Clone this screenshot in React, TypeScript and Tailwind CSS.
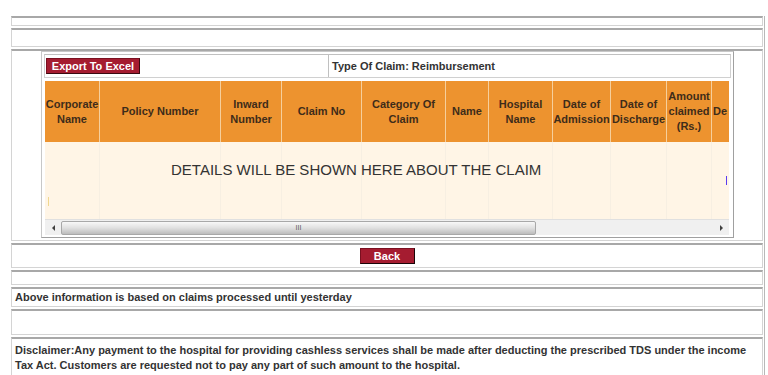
const cols = [
  { w: 55, label: ["Corporate", "Name"] },
  { w: 121, label: ["Policy Number"] },
  { w: 61, label: ["Inward", "Number"] },
  { w: 80, label: ["Claim No"] },
  { w: 84, label: ["Category Of", "Claim"] },
  { w: 43, label: ["Name"] },
  { w: 64, label: ["Hospital", "Name"] },
  { w: 58, label: ["Date of", "Admission"] },
  { w: 56, label: ["Date of", "Discharge"] },
  { w: 45, label: ["Amount", "claimed", "(Rs.)"] },
  { w: 16, label: ["De"] },
];

function Row({ className = "", children }: { className?: string; children?: React.ReactNode }) {
  return (
    <div className={"border border-[#d4d4d4] border-t-[#a8a8a8] border-t-2 " + className}>
      {children}
    </div>
  );
}

export default function App() {
  return (
    <div className="min-h-screen bg-white font-['Liberation_Sans',Arial,sans-serif] text-[#333]">
      <div className="pl-[11px] pt-[16px] w-[765px]">
        <div className="border-r border-[#b8b8b8] pr-[1px] flex flex-col gap-[2px] h-[360px] overflow-hidden">
          <Row className="h-[10px]" />
          <Row className="h-[20px]" />

          {/* claims grid */}
          <Row className="h-[196px]">
            <div className="ml-[29px] w-[693px] border border-[#c8c8c8] border-r-[#a0a0a0] border-b-[#a0a0a0] p-[2px]">
              <div className="flex h-[24px] border border-[#d0d0d0] border-t-[#c0c0c0]">
                <div className="w-[284px] border-r border-[#c0c0c0] flex items-center pl-[1px]">
                  <button className="h-[16px] w-[94px] bg-[#a51c30] border border-[#7a1020] border-r-[#3a0a10] border-b-[#3a0a10] text-white text-[11px] font-bold leading-none">
                    Export To Excel
                  </button>
                </div>
                <div className="flex items-center pl-[3px] text-[11px] font-bold">
                  Type Of Claim: Reimbursement
                </div>
              </div>

              <div className="mt-[3px] ml-[1px] w-[684px] overflow-hidden">
                <div className="flex h-[61px] bg-[#ed932f]">
                  {cols.map((c, i) => (
                    <div
                      key={i}
                      style={{ width: c.w }}
                      className={
                        "shrink-0 flex flex-col items-center justify-center text-[11px] font-bold leading-[15px] text-[#3e2c1a] whitespace-nowrap overflow-hidden " +
                        (i < cols.length - 1 ? "border-r border-[#f6cf9c]" : "")
                      }
                    >
                      {c.label.map((l, j) => (
                        <span key={j}>{l}</span>
                      ))}
                    </div>
                  ))}
                </div>
                <div className="relative flex h-[77px] bg-[#fff5e6]">
                  {cols.map((c, i) => (
                    <div
                      key={i}
                      style={{ width: c.w }}
                      className={"shrink-0 " + (i < cols.length - 1 ? "border-r border-[#f7efe2]" : "")}
                    />
                  ))}
                  <div className="absolute left-[126px] top-[17px] text-[15px] text-[#333] whitespace-nowrap">
                    DETAILS WILL BE SHOWN HERE ABOUT THE CLAIM
                  </div>
                  <div className="absolute left-[681px] top-[34px] h-[9px] w-[1px] bg-[#5a3cf0]" />
                  <div className="absolute left-[3px] top-[55px] h-[9px] w-[1px] bg-[#f0d890]" />
                </div>
                <div className="flex h-[16px] bg-[#f0f0f0] border-t border-[#e0e0e0] items-center">
                  <div className="w-[16px] h-full flex items-center justify-center">
                    <div className="w-0 h-0 border-y-[3px] border-y-transparent border-r-[3px] border-r-[#404040]" />
                  </div>
                  <div className="relative w-[475px] h-[14px] rounded-[2px] border border-[#a8a8a8] bg-gradient-to-b from-[#f8f8f8] via-[#e0e0e0] to-[#bcbcbc] flex items-center justify-center">
                    <span className="text-[7px] leading-none text-[#555]">III</span>
                  </div>
                  <div className="flex-1" />
                  <div className="w-[16px] h-full flex items-center justify-center">
                    <div className="w-0 h-0 border-y-[3px] border-y-transparent border-l-[3px] border-l-[#404040]" />
                  </div>
                </div>
              </div>
            </div>
          </Row>

          <Row className="h-[25px] flex items-center justify-center">
            <button className="h-[16px] w-[55px] bg-[#a51c30] border border-[#7a1020] border-r-[#1a0508] border-b-[#1a0508] text-white text-[11px] font-bold leading-none">
              Back
            </button>
          </Row>
          <Row className="h-[15px]" />
          <Row className="h-[21px] flex items-center pl-[3px] text-[11px] font-bold">
            Above information is based on claims processed until yesterday
          </Row>
          <Row className="h-[26px]" />
          <Row className="h-[40px] pl-[3px] pt-[4px] text-[11px] font-bold leading-[15px]">
            Disclaimer:Any payment to the hospital for providing cashless services shall be made after deducting the prescribed TDS under the income Tax Act. Customers are requested not to pay any part of such amount to the hospital.
          </Row>
        </div>
      </div>
    </div>
  );
}
